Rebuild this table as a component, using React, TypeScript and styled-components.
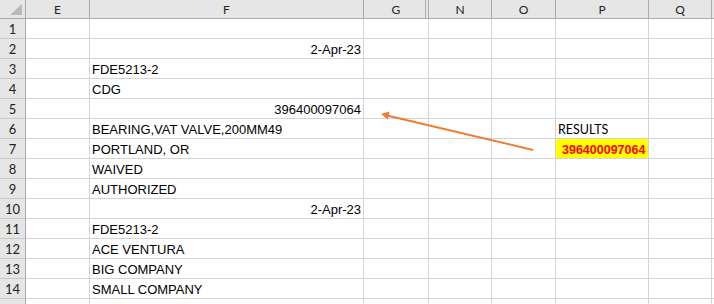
import styled, { createGlobalStyle, css } from "styled-components";

const GlobalStyle = createGlobalStyle`
  * {
    box-sizing: border-box;
  }
  body {
    margin: 0;
    background: #ffffff;
    overflow: hidden;
  }
`;

type Align = "left" | "right";

interface CellData {
  text: string;
  align?: Align;
}

// column F contents, keyed by row number
const columnF: Record<number, CellData> = {
  2: { text: "2-Apr-23", align: "right" },
  3: { text: "FDE5213-2" },
  4: { text: "CDG" },
  5: { text: "396400097064", align: "right" },
  6: { text: "BEARING,VAT VALVE,200MM49" },
  7: { text: "PORTLAND, OR" },
  8: { text: "WAIVED" },
  9: { text: "AUTHORIZED" },
  10: { text: "2-Apr-23", align: "right" },
  11: { text: "FDE5213-2" },
  12: { text: "ACE VENTURA" },
  13: { text: "BIG COMPANY" },
  14: { text: "SMALL COMPANY" },
};

const columns = ["E", "F", "G", "N", "O", "P", "Q"];
// 14 numbered rows, plus the sliver of the next one at the bottom edge
const rows = Array.from({ length: 15 }, (_, i) => i + 1);
const LAST_LABELLED = 14;

const Sheet = styled.div`
  position: relative;
  display: grid;
  grid-template-columns: 26px 64px 274px 65px 63px 64px 93px 63px 1fr;
  grid-template-rows: 19px repeat(14, 20px) 20px;
  width: 714px;
  height: 304px;
  overflow: hidden;
  background: #ffffff;
`;

const Corner = styled.div`
  position: relative;
  background: #e6e6e6;
  border-right: 1px solid #ababab;
  border-bottom: 1px solid #ababab;

  &::after {
    content: "";
    position: absolute;
    right: 3px;
    bottom: 3px;
    width: 0;
    height: 0;
    border-left: 12px solid transparent;
    border-bottom: 11px solid #b9b9b9;
  }
`;

const ColHeader = styled.div<{ $hiddenAfter?: boolean }>`
  position: relative;
  display: flex;
  align-items: center;
  justify-content: center;
  background: #e6e6e6;
  border-right: 1px solid #ababab;
  border-bottom: 1px solid #ababab;
  font-family: Lato, "Liberation Sans", sans-serif;
  font-size: 12px;
  color: #222222;
  padding-top: 1px;

  ${(p) =>
    p.$hiddenAfter &&
    css`
      &::after {
        content: "";
        position: absolute;
        top: 0;
        bottom: 0;
        right: 2px;
        width: 1px;
        background: #ababab;
      }
    `}
`;

const RowHeader = styled.div`
  display: flex;
  align-items: center;
  justify-content: center;
  background: #e6e6e6;
  border-right: 1px solid #ababab;
  border-bottom: 1px solid #c8c8c8;
  font-family: Lato, "Liberation Sans", sans-serif;
  font-size: 13px;
  color: #222222;
  padding-top: 1px;
`;

const Cell = styled.div<{ $align?: Align; $fill?: string }>`
  display: flex;
  align-items: center;
  justify-content: ${(p) => (p.$align === "right" ? "flex-end" : "flex-start")};
  padding: 2px 2px 0;
  border-right: 1px solid #d4d4d4;
  border-bottom: 1px solid #d4d4d4;
  background: ${(p) => p.$fill ?? "transparent"};
  font-family: "Liberation Sans", Arial, sans-serif;
  font-size: 13px;
  color: #000000;
  white-space: nowrap;
  overflow: visible;
  min-width: 0;
`;

const Label = styled.span`
  font-family: Lato, "Liberation Sans", sans-serif;
  font-size: 12.5px;
`;

const Result = styled.span`
  font-family: "Liberation Sans", Arial, sans-serif;
  font-weight: bold;
  font-size: 12.5px;
  color: #ff0000;
  padding-left: 4px;
`;

const Overlay = styled.svg`
  position: absolute;
  top: 0;
  left: 0;
  pointer-events: none;
`;

const Pointer = () => (
  <Overlay width={714} height={304} viewBox="0 0 714 304">
    <line x1={533} y1={150} x2={387} y2={115.5} stroke="#ed7d31" strokeWidth={2} />
    <polygon points="381,114 389.6,111.6 387.8,119.6" fill="#ed7d31" />
  </Overlay>
);

const renderCell = (row: number, col: string) => {
  const key = `${col}${row}`;
  if (col === "F" && columnF[row]) {
    const { text, align } = columnF[row];
    return (
      <Cell key={key} $align={align}>
        {text}
      </Cell>
    );
  }
  if (col === "P" && row === 6) {
    return (
      <Cell key={key}>
        <Label>RESULTS</Label>
      </Cell>
    );
  }
  if (col === "P" && row === 7) {
    return (
      <Cell key={key} $fill="#ffff00">
        <Result>396400097064</Result>
      </Cell>
    );
  }
  return <Cell key={key} />;
};

export default function App() {
  return (
    <>
      <GlobalStyle />
      <Sheet>
        <Corner />
        {columns.map((c) => (
          <ColHeader key={c} $hiddenAfter={c === "G"}>
            {c}
          </ColHeader>
        ))}
        <ColHeader />
        {rows.map((r) => [
          <RowHeader key={`h${r}`}>{r <= LAST_LABELLED ? r : null}</RowHeader>,
          ...columns.map((c) => renderCell(r, c)),
          <Cell key={`x${r}`} />,
        ])}
        <Pointer />
      </Sheet>
    </>
  );
}
